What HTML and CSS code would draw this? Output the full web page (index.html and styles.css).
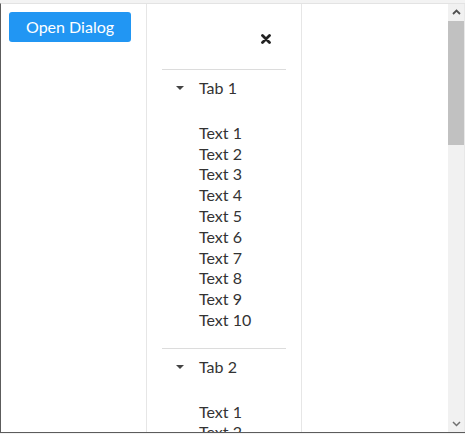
FILE: index.html
```html
<!DOCTYPE html>
<html>
<head>
<meta charset="utf-8">
<link rel="stylesheet" href="styles.css">
</head>
<body>
<div class="window">
  <div class="viewport">
    <div class="pane-left">
      <button class="btn">Open Dialog</button>
    </div>
    <div class="sidebar">
      <div class="sidebar-head">
        <svg class="close" width="10" height="10" viewBox="0 0 10 10"><path d="M1.5 1.5 L8.5 8.5 M8.5 1.5 L1.5 8.5" stroke="#222" stroke-width="2.8" stroke-linecap="round"/></svg>
      </div>
      <div class="section">
        <div class="tab"><span class="caret"></span><span>Tab 1</span></div>
        <ul class="list">
          <li>Text 1</li><li>Text 2</li><li>Text 3</li><li>Text 4</li><li>Text 5</li>
          <li>Text 6</li><li>Text 7</li><li>Text 8</li><li>Text 9</li><li>Text 10</li>
        </ul>
      </div>
      <div class="section">
        <div class="tab"><span class="caret"></span><span>Tab 2</span></div>
        <ul class="list">
          <li>Text 1</li><li>Text 2</li><li>Text 3</li><li>Text 4</li><li>Text 5</li>
          <li>Text 6</li><li>Text 7</li><li>Text 8</li><li>Text 9</li><li>Text 10</li>
        </ul>
      </div>
    </div>
    <div class="main"></div>
    <div class="scrollbar">
      <div class="sb-btn"><svg width="9" height="6" viewBox="0 0 9 6"><path d="M1 5 L4.5 1.5 L8 5" fill="none" stroke="#505050" stroke-width="1.8"/></svg></div>
      <div class="sb-thumb"></div>
      <div class="sb-track"></div>
      <div class="sb-btn"><svg width="9" height="6" viewBox="0 0 9 6"><path d="M1 1 L4.5 4.5 L8 1" fill="none" stroke="#707070" stroke-width="1.5"/></svg></div>
    </div>
  </div>
</div>
</body>
</html>
```
FILE: styles.css
```css
html, body {
  margin: 0;
  padding: 0;
  width: 465px;
  height: 434px;
  overflow: hidden;
  background: #f3f3f3;
}
.window {
  width: 465px;
  height: 434px;
  box-sizing: border-box;
  padding-top: 3px;
  padding-bottom: 1px;
  display: flex;
  flex-direction: column;
  font-family: Lato, "Liberation Sans", sans-serif;
  font-size: 16px;
  color: #333;
}
.viewport {
  flex: 1;
  min-height: 0;
  display: flex;
  background: #fff;
  border-top: 1px solid #e3e3e3;
  border-left: 1px solid #5c5c5c;
  border-bottom: 1px solid #5c5c5c;
  overflow: hidden;
}
.pane-left {
  width: 146px;
  flex: none;
  box-sizing: border-box;
  border-right: 1px solid #e6e6e6;
  padding: 8px 0 0 8px;
}
.btn {
  height: 30px;
  padding: 0 17px;
  border: none;
  border-radius: 3px;
  background: #2196f3;
  color: #fff;
  font-family: Lato, "Liberation Sans", sans-serif;
  font-size: 16px;
  line-height: 30px;
}
.sidebar {
  width: 155px;
  flex: none;
  box-sizing: border-box;
  border-right: 1px solid #e6e6e6;
  overflow: hidden;
}
.sidebar-head {
  height: 65px;
  box-sizing: border-box;
  padding: 30px 30px 0 0;
  display: flex;
  justify-content: flex-end;
  align-items: flex-start;
}
.close {
  display: block;
}
.section {
  margin: 0 15px;
  border-top: 1px solid #dcdcdc;
}
.tab {
  display: flex;
  align-items: center;
  padding: 8px 0 8px 14px;
  line-height: 20.8px;
}
.caret {
  width: 0;
  height: 0;
  border-left: 4px solid transparent;
  border-right: 4px solid transparent;
  border-top: 4px solid #444;
  margin-right: 15px;
}
.list {
  list-style: none;
  margin: 0;
  padding: 16px 0 17px 37px;
  line-height: 20.8px;
}
.main {
  flex: 1;
}
.scrollbar {
  width: 16px;
  flex: none;
  background: #f1f1f1;
  border-right: 1px solid #e8e8e8;
  display: flex;
  flex-direction: column;
}
.sb-btn {
  height: 16px;
  flex: none;
  display: flex;
  align-items: center;
  justify-content: center;
}
.sb-thumb {
  height: 124px;
  margin-top: 1px;
  flex: none;
  background: #c1c1c1;
}
.sb-track {
  flex: 1;
}
```
